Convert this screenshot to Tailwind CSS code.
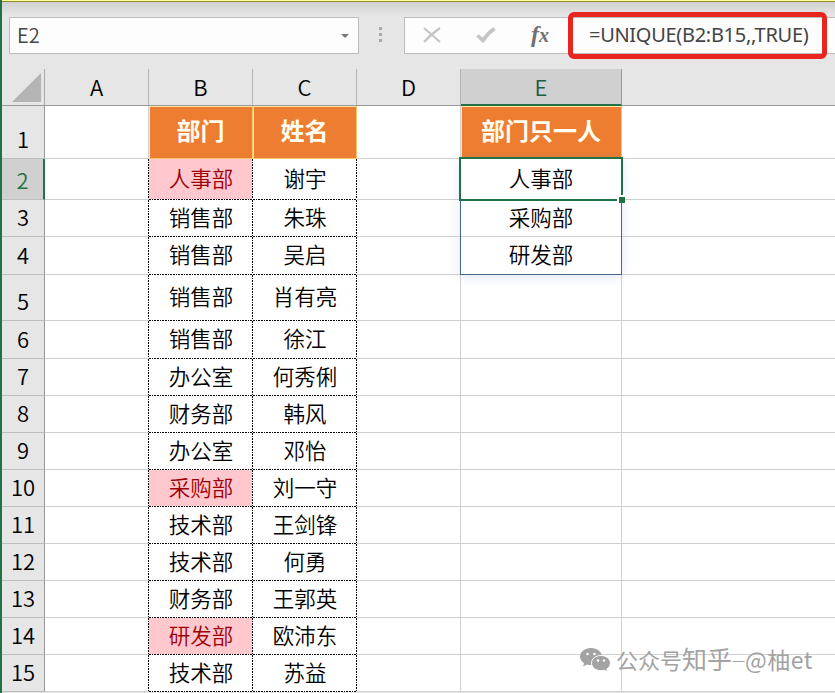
<!DOCTYPE html>
<html lang="zh-CN">
<head>
    <meta charset="UTF-8">
    <meta name="viewport" content="width=device-width, initial-scale=1.0">
    <title>UNIQUE</title>
    <script src="https://cdn.jsdelivr.net/npm/@tailwindcss/browser@4"></script>
</head>
<body class="w-[835px] h-[693px] overflow-hidden bg-[#e6e6e6] font-['Noto_Sans_CJK_SC',sans-serif]">
    <div class="relative flex flex-col w-[835px] h-[693px] overflow-hidden border-l-2 border-[#217346]">
        <div class="h-px shrink-0 bg-[#ffff9c]"></div>
        <div class="h-px shrink-0 bg-[#8f8b2c]"></div>

        <!-- Formula bar -->
        <div class="flex shrink-0 h-[67px] pt-[15px] pl-[7px] bg-linear-to-b from-[#d0cfcf] to-[#e6e6e6] to-20%">
            <div class="flex items-center justify-between w-[350px] h-[37px] pl-[7px] pr-[9px] bg-[#fdfdfd] border border-[#bdbdbd]">
                <span class="pb-px text-[20px] text-[#444] font-['Noto_Sans_CJK_SC',sans-serif] font-[350] leading-none">E2</span>
                <svg class="w-2 h-1" viewBox="0 0 8 4"><path d="M0 0h8L4 4z" fill="#777"/></svg>
            </div>
            <div class="flex flex-col justify-between w-[3px] h-[15px] mt-[10px] ml-5 mr-[22px]">
                <i class="size-[3px] bg-[#aaa]"></i>
                <i class="size-[3px] bg-[#aaa]"></i>
                <i class="size-[3px] bg-[#aaa]"></i>
            </div>
            <div class="flex items-center grow h-[37px] pl-[18px] bg-[#fdfdfd] border border-r-0 border-[#bdbdbd]">
                <svg class="w-[18px] h-4 -mt-0.5" viewBox="0 0 18 16" fill="none" stroke="#c4c4c4"><path d="M1 1q7 6 16 14" stroke-width="2.200"/><path d="M17 1Q8 7 1 15" stroke-width="2.200"/></svg>
                <svg class="w-5 h-4 ml-[35px] -mt-0.5" viewBox="0 0 20 16" fill="none" stroke="#c4c4c4" stroke-width="3.600"><path d="M1.500 8.500l5.500 5Q12 6 18.500 1.500"/></svg>
                <span class="ml-[35px] w-5 text-[24px] leading-none italic font-bold text-[#707070] font-['Liberation_Serif',serif] whitespace-nowrap -mt-1">f<span class="text-[20px]">x</span></span>
                <span class="ml-[38px] text-xl text-[#444] font-['Noto_Sans',sans-serif] tracking-[-0.3px] whitespace-nowrap -mt-0.5">=UNIQUE(B2:B15,,TRUE)</span>
            </div>
        </div>
        <div class="absolute left-[566px] top-3 w-[259px] h-[47px] border-[5px] border-[#e8251f] rounded-md"></div>

        <!-- Column headings -->
        <div class="flex shrink-0 h-[37px] border-b border-[#999] text-[22px] leading-[34px] font-[350] text-center text-black">
            <div class="w-[43px] h-9 pl-[10px] pt-1 border-r border-[#aaa]">
                <svg class="w-[29px] h-[29px]" viewBox="0 0 29 29"><path d="M29 0v29H0z" fill="#b4b4b4"/></svg>
            </div>
            <div class="w-[104px] h-9 border-r border-[#b5b5b5]">A</div>
            <div class="w-[104px] h-9 border-r border-[#b5b5b5]">B</div>
            <div class="w-[104px] h-9 border-r border-[#b5b5b5]">C</div>
            <div class="w-[104px] h-9 border-r border-[#b5b5b5]">D</div>
            <div class="w-[161px] h-[37px] border-r border-b-2 border-r-[#999] border-b-[#217346] bg-[#d0d0d0] text-[#1e5c41]">E</div>
        </div>

        <!-- Sheet rows, filled in below -->
        <div id="sheet" class="shrink-0 bg-white text-[21.5px] font-[350] text-center text-black"></div>

        <!-- Spill range and active cell -->
        <div class="absolute left-[458px] top-[158px] w-[162px] h-[117px] border border-[#44688c] shadow-[0_2px_10px_rgba(70,110,200,0.18)]"></div>
        <div class="absolute left-[457px] top-[157px] w-[164px] h-[44px] border-2 border-[#217346]"></div>
        <div class="absolute left-[615px] top-[195px] size-[8px] bg-[#217346] border-t-2 border-l-2 border-white"></div>

        <!-- Watermark -->
        <div class="absolute left-[578px] top-[645px] flex items-center h-[28px] text-[#a3a3a3] text-[22px] whitespace-nowrap">
            <svg class="w-[31px] h-[25px] mr-[5px]" viewBox="0 0 31 25">
                <path d="M11 1C5 1 0 4.800 0 9.600c0 2.700 1.600 5 4 6.600l-1 3.300 4-2c1.300.4 2.600.6 4 .6C17 18 22 14.400 22 9.600S17 1 11 1z" fill="#a3a3a3"/>
                <path d="M21 8.500c-5.300 0-9.500 3.400-9.500 7.600s4.200 7.600 9.500 7.600c1.200 0 2.400-.2 3.400-.5l3.300 1.800-.9-2.900c2.200-1.400 3.600-3.600 3.600-6 0-4.200-4.200-7.600-9.400-7.600z" fill="#a3a3a3" stroke="#fff"/>
                <g fill="#fff"><circle cx="7.500" cy="7" r="1.300"/><circle cx="14.500" cy="7" r="1.300"/><circle cx="18" cy="13.500" r="1.200"/><circle cx="24" cy="13.500" r="1.200"/></g>
            </svg>
            <span>公众号</span><span class="text-[25px]">知乎</span><span class="pt-[3px] text-[13px]">一</span><span class="text-[23px] tracking-[0.5px]">@柚et</span>
        </div>
    </div>

    <script>
        // [height, department, name, unique result]
        const rows = [
            [53, '部门', '姓名', '部门只一人'],
            [41, '人事部', '谢宇', '人事部'],
            [37, '销售部', '朱珠', '采购部'],
            [38, '销售部', '吴启', '研发部'],
            [46, '销售部', '肖有亮', ''],
            [38, '销售部', '徐江', ''],
            [37, '办公室', '何秀俐', ''],
            [37, '财务部', '韩风', ''],
            [37, '办公室', '邓怡', ''],
            [37, '采购部', '刘一守', ''],
            [37, '技术部', '王剑锋', ''],
            [37, '技术部', '何勇', ''],
            [37, '财务部', '王郭英', ''],
            [37, '研发部', '欧沛东', ''],
            [37, '技术部', '苏益', ''],
        ];
        const once = ['人事部', '采购部', '研发部'];
        const plain = 'shrink-0 border-r border-b border-[#d0d0d0]';
        const head = 'shrink-0 flex items-center justify-center pb-[5px] bg-[#ed7d31] text-[#fffdf0] text-[24px] font-bold border-r border-b border-[#f6c76c] shadow-[inset_1px_1px_0_#ffe9a8]';
        // dashed right and bottom edges
        const data = 'shrink-0 flex items-center justify-center pb-[3px] bg-no-repeat [background-image:repeating-linear-gradient(90deg,#000_0_1.6px,#fff_1.6px_2.67px),repeating-linear-gradient(#000_0_1.6px,#fff_1.6px_2.67px)] [background-size:100%_1px,1px_100%] [background-position:0_100%,100%_0]';
        const beside = 'shrink-0 border-b border-[#d0d0d0] bg-no-repeat bg-origin-border bg-clip-border [background-image:repeating-linear-gradient(#000_0_1.6px,#fff_1.6px_2.67px)] [background-size:1px_100%] [background-position:100%_0]';

        document.getElementById('sheet').innerHTML = rows.map(([h, dept, name, result], i) => {
            const cell = i === 0 ? head : data;
            const mark = once.includes(dept) ? 'bg-[#ffc7ce] text-[#9c0006]' : '';
            const active = i === 1
                ? 'bg-[#d0d0d0] text-[#217346] border-r-2 border-r-[#217346]'
                : 'bg-[#e6e6e6] border-r border-r-[#999]';
            return `
            <div class="flex" style="height:${h}px">
                <div class="shrink-0 w-[43px] flex items-end justify-center pb-[2px] border-b border-b-[#bdbdbd] text-[22px] leading-[36px] ${active}">${i + 1}</div>
                <div class="w-[104px] ${i === 0 ? plain : beside}"></div>
                <div class="w-[104px] ${cell} ${mark}">${dept}</div>
                <div class="w-[104px] ${cell}">${name}</div>
                <div class="w-[104px] ${plain}"></div>
                <div class="w-[161px] ${i === 0 ? head : plain + ' flex items-center justify-center pb-[2px]'}">${result}</div>
                <div class="grow border-b border-[#d0d0d0]"></div>
            </div>`;
        }).join('');
    </script>
</body>
</html>
